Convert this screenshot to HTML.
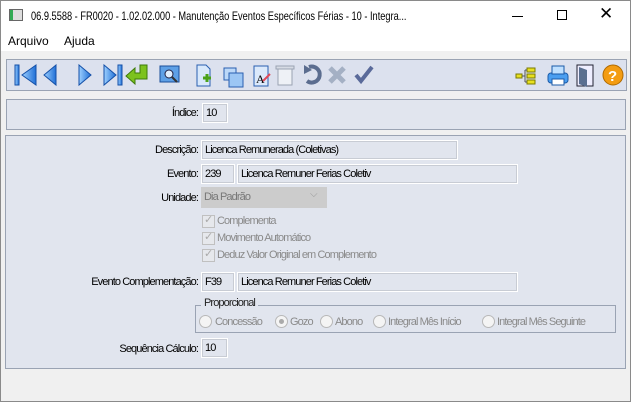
<!DOCTYPE html>
<html><head><meta charset="utf-8"><style>
*{margin:0;padding:0;box-sizing:border-box}
body{width:631px;height:402px;overflow:hidden;background:#f0f0f0;font-family:"Liberation Sans",sans-serif;font-size:11px;letter-spacing:-0.9px;color:#000;position:relative}
.a{position:absolute;white-space:nowrap}
.win{left:0;top:0;width:631px;height:402px;border:1px solid #8a8a8a}
.title{left:1px;top:1px;width:629px;height:30px;background:#fff;font-size:12px;letter-spacing:0}
.menu{left:1px;top:31px;width:629px;height:20px;background:#fff;font-size:12px;letter-spacing:0}
.tb{left:6px;top:59px;width:621px;height:32px;background:#dce1ee;border:1px solid #9aa3b3}
.panel{background:#e1e5ee;border:1px solid #9aa3b3}
.lbl{text-align:right;width:190px;left:8px}
.in{background:#e1e5ee;border:1px solid #fff;outline:1px solid #c8ccd4;outline-offset:-2px;padding:3px 0 0 3px;height:20px}
.gray{color:#8a8a8a}
.cb{width:13px;height:13px;border:1px solid #c0c0c0;background:#e6e8ec}
.rb{width:13px;height:13px;border:1px solid #b8b8b8;border-radius:50%;background:#f4f4f4}
</style></head><body>
<div class="a win"></div>
<div class="a title">
 <div class="a" style="left:8px;top:8px;width:14px;height:12px;border:1px solid #666;background:linear-gradient(90deg,#3a5 0 3px,#ddd 3px)"></div>
 <div class="a" style="left:30px;top:8px;transform:scaleX(0.77);transform-origin:0 0">06.9.5588 - FR0020 - 1.02.02.000 - Manutenção Eventos Específicos Férias - 10 - Integra...</div>
 <div class="a" style="left:511px;top:15px;width:11px;height:1px;background:#000"></div>
 <div class="a" style="left:556px;top:9px;width:10px;height:10px;border:1px solid #000"></div>
 <div class="a" style="left:598px;top:3px;font-size:17px">✕</div>
</div>
<div class="a menu"><span class="a" style="left:7px;top:3px">Arquivo</span><span class="a" style="left:63px;top:3px">Ajuda</span></div>
<div class="a tb">
<svg width="621" height="32" style="position:absolute;left:-1px;top:-1px">
 <defs><linearGradient id="b" x1="0" x2="1"><stop offset="0" stop-color="#9ed0ff"/><stop offset="1" stop-color="#1f6fd6"/></linearGradient></defs>
 <g fill="url(#b)" stroke="#1450a8" stroke-width="1">
  <rect x="9" y="6" width="4" height="20"/><path d="M30 6 L16 16 L30 26Z"/>
  <path d="M50 6 L38 16 L50 26Z"/>
  <path d="M73 6 L85 16 L73 26Z"/>
  <path d="M98 6 L110 16 L98 26Z"/><rect x="112" y="6" width="4" height="20"/>
 </g>
 <path d="M134 6 h7 v14 h-12 v5 l-9 -8 l9 -8 v5 h5z" fill="#7cc21e" stroke="#3d7a0a"/>
 <rect x="154" y="7" width="19" height="16" fill="#5ea0e6" stroke="#1a4e9a"/><circle cx="163" cy="15" r="4" fill="#dfeefe" stroke="#224"/><path d="M166 18 l5 5" stroke="#333" stroke-width="2"/>
 <path d="M191 6 h9 l4 4 v17 h-13z" fill="#d8e8fb" stroke="#2a5fb0"/><path d="M197 19h8M201 15v8" stroke="#4aa21a" stroke-width="3"/>
 <rect x="218" y="9" width="12" height="12" fill="#bcd8f8" stroke="#2a5fb0"/><rect x="223" y="14" width="14" height="14" fill="#9cc6f4" stroke="#2a5fb0"/>
 <rect x="248" y="7" width="14" height="20" fill="#dbe9fb" stroke="#2a5fb0"/><text x="250" y="24" font-size="12" font-family="Liberation Serif">A</text><path d="M257 22 l7 -7" stroke="#e04a5a" stroke-width="2"/>
 <rect x="272" y="9" width="14" height="17" fill="#eef1f6" stroke="#9aa3b3"/><rect x="270" y="7" width="18" height="3" fill="#d6dbe4" stroke="#9aa3b3"/>
 <path d="M303 8 a8 8 0 1 1 -2 14" fill="none" stroke="#5b6d8f" stroke-width="4"/><path d="M298 6 l0 9 l8 -4z" fill="#5b6d8f"/>
 <path d="M324 9 l14 14 M338 9 l-14 14" stroke="#a4b0c4" stroke-width="5"/>
 <path d="M350 16 l5 6 l11 -14" fill="none" stroke="#5a6a9a" stroke-width="4"/>
 <g fill="#e8e020" stroke="#7a7a00"><rect x="521" y="9" width="8" height="4"/><rect x="521" y="15" width="8" height="4"/><rect x="521" y="21" width="8" height="4"/><rect x="510" y="15" width="6" height="4"/></g>
 <path d="M516 17h3M519 11v12M519 11h2M519 23h2" stroke="#555" fill="none"/>
 <rect x="542" y="14" width="20" height="10" rx="3" fill="#4a9ef0" stroke="#1a5aa8"/><rect x="546" y="7" width="12" height="8" fill="#bfe0ff" stroke="#1a5aa8"/><rect x="546" y="20" width="12" height="6" fill="#fff" stroke="#1a5aa8"/>
 <rect x="571" y="6" width="16" height="21" fill="#eef" stroke="#223"/><path d="M573 8 l8 3 v17 l-8 -3z" fill="#5a6f90"/>
 <circle cx="607" cy="16" r="10" fill="#f39c12" stroke="#b06a00"/><text x="602" y="22" font-size="15" font-weight="bold" fill="#fff" font-family="Liberation Sans">?</text>
</svg></div>
<div class="a panel" style="left:6px;top:99px;width:620px;height:31px"></div>
<div class="a lbl" style="top:107px">Índice:</div>
<div class="a in" style="left:202px;top:103px;width:26px">10</div>
<div class="a panel" style="left:5px;top:135px;width:621px;height:234px"></div>
<div class="a lbl" style="top:144px">Descrição:</div>
<div class="a in" style="left:201px;top:140px;width:257px">Licenca Remunerada (Coletivas)</div>
<div class="a lbl" style="top:168px">Evento:</div>
<div class="a in" style="left:201px;top:164px;width:34px">239</div>
<div class="a in" style="left:237px;top:164px;width:281px">Licenca Remuner Ferias Coletiv</div>
<div class="a lbl" style="top:192px">Unidade:</div>
<div class="a" style="left:201px;top:187px;width:126px;height:21px;background:#cccccc;color:#777;padding:4px 0 0 3px">Dia Padrão<span class="a" style="left:109px;top:2px;font-size:10px;color:#999">⌵</span></div>
<div class="a cb" style="left:202px;top:215px"></div><div class="a gray" style="left:204px;top:213px;color:#aaa">✓</div><div class="a gray" style="left:217px;top:215px">Complementa</div>
<div class="a cb" style="left:202px;top:232px"></div><div class="a gray" style="left:204px;top:230px;color:#aaa">✓</div><div class="a gray" style="left:217px;top:232px">Movimento Automático</div>
<div class="a cb" style="left:202px;top:249px"></div><div class="a gray" style="left:204px;top:247px;color:#aaa">✓</div><div class="a gray" style="left:217px;top:249px">Deduz Valor Original em Complemento</div>
<div class="a lbl" style="top:276px">Evento Complementação:</div>
<div class="a in" style="left:201px;top:272px;width:34px">F39</div>
<div class="a in" style="left:237px;top:272px;width:281px">Licenca Remuner Ferias Coletiv</div>
<div class="a" style="left:195px;top:305px;width:421px;height:28px;border:1px solid #9aa3b3"></div>
<div class="a" style="left:201px;top:297px;background:#e1e5ee;padding:0 3px;color:#222">Proporcional</div>
<div class="a rb" style="left:199px;top:315px"></div><div class="a gray" style="left:215px;top:316px">Concessão</div>
<div class="a rb" style="left:275px;top:315px"></div><div class="a" style="left:279px;top:319px;width:5px;height:5px;border-radius:50%;background:#aaa"></div><div class="a gray" style="left:290px;top:316px">Gozo</div>
<div class="a rb" style="left:320px;top:315px"></div><div class="a gray" style="left:335px;top:316px">Abono</div>
<div class="a rb" style="left:373px;top:315px"></div><div class="a gray" style="left:388px;top:316px">Integral Mês Início</div>
<div class="a rb" style="left:482px;top:315px"></div><div class="a gray" style="left:497px;top:316px">Integral Mês Seguinte</div>
<div class="a lbl" style="top:343px">Sequência Cálculo:</div>
<div class="a in" style="left:201px;top:338px;width:27px">10</div>
</body></html>
